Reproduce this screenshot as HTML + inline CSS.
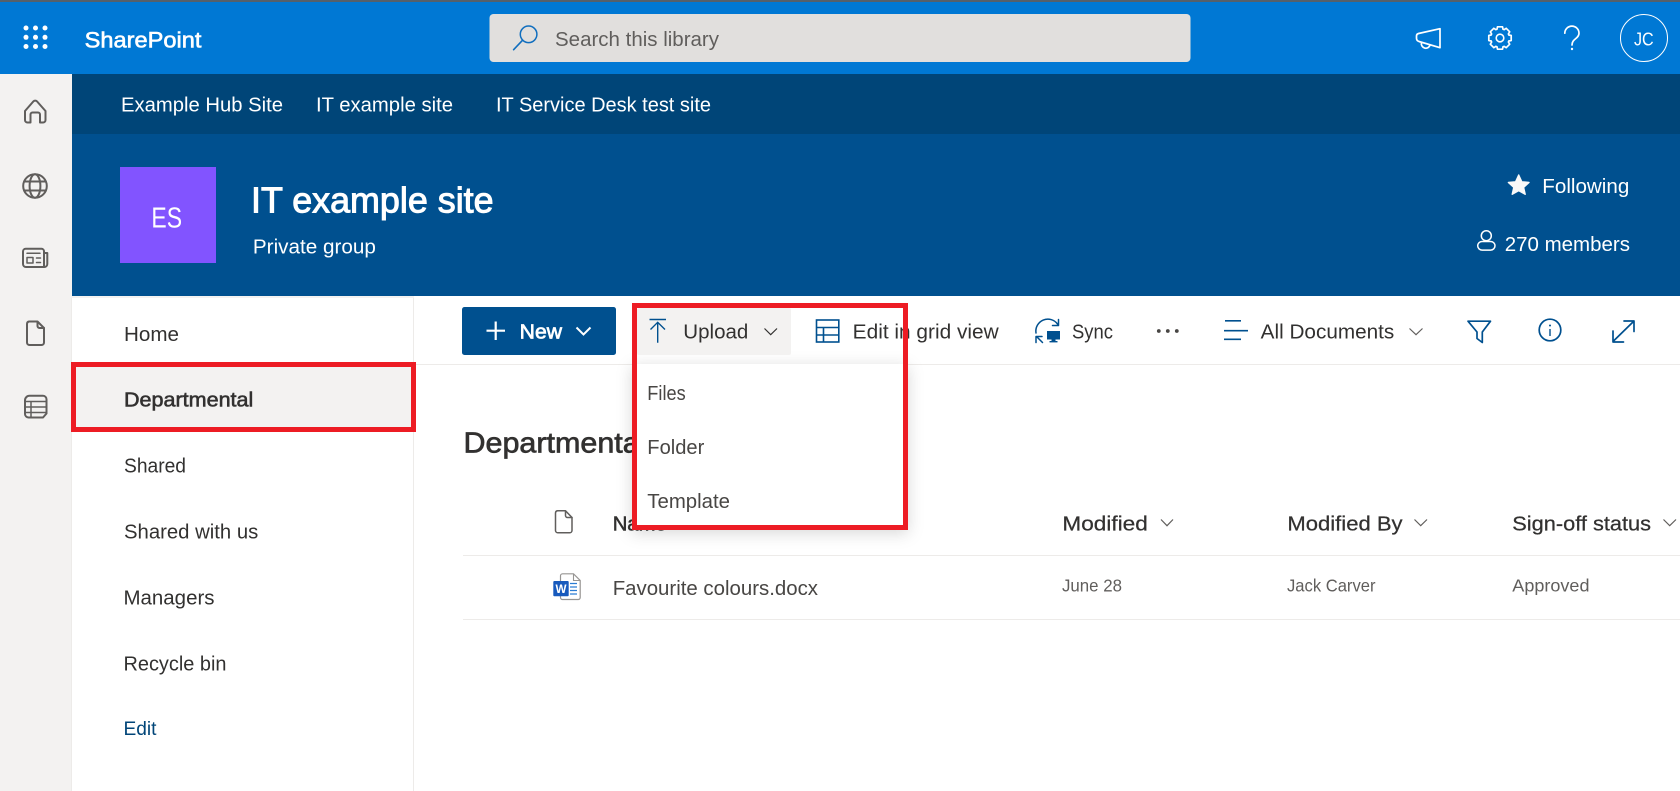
<!DOCTYPE html>
<html lang="en"><head><meta charset="utf-8"><title>SharePoint</title>
<style>
html,body{margin:0;padding:0;background:#fff;overflow:hidden}
svg{display:block}
text{font-family:"Liberation Sans",sans-serif}
.w{fill:#fff}
.n{fill:#323130;font-size:20.5px}
.ic{fill:none;stroke:#00508f;stroke-width:1.7;stroke-linejoin:round;stroke-linecap:round}
.rl{fill:none;stroke:#605e5c;stroke-width:2;stroke-linejoin:round;stroke-linecap:round}
.wi{fill:none;stroke:#fff;stroke-width:1.7;stroke-linejoin:round;stroke-linecap:round}
.ch{fill:none;stroke:#605e5c;stroke-width:1.2}
</style></head>
<body>
<svg xmlns="http://www.w3.org/2000/svg" width="1680" height="791" viewBox="0 0 1680 791">
<rect width="1680" height="791" fill="#fff"/>
<!-- top bar -->
<rect width="1680" height="74" fill="#0078d4"/>
<rect width="1680" height="2" fill="#55606b"/>
<g fill="#fff"><circle cx="26" cy="28" r="2.5"/><circle cx="35.5" cy="28" r="2.5"/><circle cx="45" cy="28" r="2.5"/><circle cx="26" cy="37.3" r="2.5"/><circle cx="35.5" cy="37.3" r="2.5"/><circle cx="45" cy="37.3" r="2.5"/><circle cx="26" cy="46.5" r="2.5"/><circle cx="35.5" cy="46.5" r="2.5"/><circle cx="45" cy="46.5" r="2.5"/></g>
<text x="84.6" y="47.7" font-size="22" class="w" stroke="#fff" stroke-width=".6" textLength="116.8" lengthAdjust="spacingAndGlyphs">SharePoint</text>
<rect x="489.5" y="14" width="701" height="48" rx="4" fill="#e1dfdd"/>
<circle cx="528.6" cy="34.3" r="8.3" fill="none" stroke="#106ebe" stroke-width="1.5"/>
<path d="M522.6 40.2L513.6 49.7" fill="none" stroke="#106ebe" stroke-width="1.6" stroke-linecap="round"/>
<text x="555" y="46" font-size="20" fill="#605e5c" textLength="164" lengthAdjust="spacingAndGlyphs">Search this library</text>
<!-- megaphone -->
<path class="wi" d="M1418.5 33.5L1440 28.7V47.7L1419 41.5Q1416.5 40.6 1416.5 38.2V36Q1416.5 34 1418.5 33.5Z"/>
<path class="wi" d="M1421.5 42.6a4.4 4.4 0 0 0 8.6 2.3"/>
<!-- gear -->
<g transform="translate(1500 38)">
<path class="wi" d="M-2.5-11.2L2.5-11.2L3-8.8L4.1-8.4L6.2-9.7L9.7-6.2L8.4-4.1L8.8-3L11.2-2.5L11.2 2.5L8.8 3L8.4 4.1L9.7 6.2L6.2 9.7L4.1 8.4L3 8.8L2.5 11.2L-2.5 11.2L-3 8.8L-4.1 8.4L-6.2 9.7L-9.7 6.2L-8.4 4.1L-8.8 3L-11.2 2.5L-11.2-2.5L-8.8-3L-8.4-4.1L-9.7-6.2L-6.2-9.7L-4.1-8.4L-3-8.8Z"/>
<circle r="3.8" fill="none" stroke="#fff" stroke-width="1.6"/>
</g>
<!-- question -->
<path class="wi" d="M1564.8 33.2a7.1 7.1 0 0 1 14.2 0c0 5.5-7 5.5-7 11.8"/>
<circle cx="1572" cy="49" r="1.2" fill="#fff"/>
<!-- avatar -->
<circle cx="1644" cy="38" r="23.5" fill="none" stroke="#fff" stroke-width="1"/>
<text x="1634" y="45.3" font-size="18.5" class="w" textLength="19.7" lengthAdjust="spacingAndGlyphs">JC</text>

<!-- hub nav -->
<rect y="74" width="1680" height="60" fill="#004578"/>
<text x="121" y="111.7" font-size="20.5" class="w" textLength="162" lengthAdjust="spacingAndGlyphs">Example Hub Site</text>
<text x="316" y="111.7" font-size="20.5" class="w" textLength="137" lengthAdjust="spacingAndGlyphs">IT example site</text>
<text x="496" y="111.7" font-size="20.5" class="w" textLength="215" lengthAdjust="spacingAndGlyphs">IT Service Desk test site</text>

<!-- site header -->
<rect y="134" width="1680" height="162" fill="#00508f"/>
<rect x="120" y="167" width="96" height="96" fill="#8254ff"/>
<text x="151.4" y="227.7" font-size="29" class="w" textLength="30.6" lengthAdjust="spacingAndGlyphs">ES</text>
<text x="251" y="212.3" font-size="36" class="w" stroke="#fff" stroke-width="1" textLength="242.6" lengthAdjust="spacingAndGlyphs">IT example site</text>
<text x="252.9" y="253.7" font-size="20.5" class="w" textLength="123" lengthAdjust="spacingAndGlyphs">Private group</text>
<path d="M1518.7 175L1521.8 181.8L1529 182.5L1523.6 187.4L1525.2 194.3L1518.7 190.7L1512.2 194.3L1513.8 187.4L1508.4 182.5L1515.6 181.8Z" fill="#faf9f8" stroke="#faf9f8" stroke-width="1.4" stroke-linejoin="round"/>
<text x="1542.3" y="193" font-size="20.5" class="w" textLength="87" lengthAdjust="spacingAndGlyphs">Following</text>
<circle cx="1486.3" cy="235.7" r="5" class="wi" style="stroke-width:1.5"/>
<rect x="1477.7" y="241.5" width="17.3" height="8.6" rx="4.3" class="wi" style="stroke-width:1.5"/>
<text x="1504.7" y="251" font-size="20.5" class="w" textLength="125.3" lengthAdjust="spacingAndGlyphs">270 members</text>

<!-- left rail -->
<rect y="74" width="72" height="717" fill="#f3f2f1"/>
<rect x="71" y="298" width="1" height="493" fill="#edebe9"/>
<path class="rl" d="M25 111L33.4 101.4a2.4 2.4 0 0 1 3.6 0L45.5 111V120a2.5 2.5 0 0 1-2.5 2.5H40V114.5a2 2 0 0 0-2-2H32.5a2 2 0 0 0-2 2V122.5H27.5a2.5 2.5 0 0 1-2.5-2.5Z"/>
<g class="rl"><circle cx="35" cy="186" r="11.8"/><ellipse cx="35" cy="186" rx="5.4" ry="11.8"/><path d="M24.4 181.5H45.6M24.4 190.5H45.6"/></g>
<g class="rl"><path d="M25.7 248.8H41.5a2.5 2.5 0 0 1 2.5 2.5V267H26a3 3 0 0 1-3-3V251.5a2.7 2.7 0 0 1 2.7-2.7Z"/><path d="M44 253H47.3V264a3 3 0 0 1-3 3H44"/><rect x="27" y="257.5" width="6" height="5.5" style="stroke-width:1.5"/><path d="M27 253.3H40M36.5 258H40.5M36.5 262.5H40.5" style="stroke-width:1.5"/></g>
<g class="rl"><path d="M29 321.5H37.5L44 328V342.5a2.5 2.5 0 0 1-2.5 2.5H29.5a2.5 2.5 0 0 1-2.5-2.5V324a2.5 2.5 0 0 1 2-2.5Z"/><path d="M37.5 322V326a2 2 0 0 0 2 2H44"/></g>
<g class="rl"><path d="M29.5 395.8H43a3.5 3.5 0 0 1 3.5 3.5V413.5L43 417.5H28.5a3.5 3.5 0 0 1-3.5-3.5V400.3a4.5 4.5 0 0 1 4.5-4.5Z"/><path d="M25 401.5H46.5M25 407H46.5M25 412.5H46M31 401.5V417.5" style="stroke-width:1.5"/></g>

<!-- left nav -->
<rect x="72" y="296" width="342" height="2" fill="#f3f2f1"/>
<rect x="413" y="298" width="1" height="493" fill="#edebe9"/>
<rect x="71" y="362" width="345" height="70" fill="#f3f2f1"/>
<text x="124" y="341" class="n" textLength="55" lengthAdjust="spacingAndGlyphs">Home</text>
<text x="124" y="406.7" class="n" stroke="#323130" stroke-width=".6" textLength="129.3" lengthAdjust="spacingAndGlyphs">Departmental</text>
<text x="124" y="472.7" class="n" textLength="62" lengthAdjust="spacingAndGlyphs">Shared</text>
<text x="124" y="538.7" class="n" textLength="134.3" lengthAdjust="spacingAndGlyphs">Shared with us</text>
<text x="123.5" y="604.7" class="n" textLength="91" lengthAdjust="spacingAndGlyphs">Managers</text>
<text x="123.5" y="670.7" class="n" textLength="103" lengthAdjust="spacingAndGlyphs">Recycle bin</text>
<text x="123.5" y="735" font-size="19" fill="#004578" textLength="33" lengthAdjust="spacingAndGlyphs">Edit</text>

<!-- toolbar -->
<rect x="414" y="364" width="1266" height="1" fill="#edebe9"/>
<rect x="462" y="307" width="154" height="48" rx="2.5" fill="#00508f"/>
<path d="M495.7 321.5V340M486.5 330.7H505" stroke="#fff" stroke-width="2.2" fill="none"/>
<text x="519.7" y="338.7" font-size="20.5" class="w" stroke="#fff" stroke-width=".7" textLength="42.3" lengthAdjust="spacingAndGlyphs">New</text>
<path d="M576.5 327.5L583.5 334.5L590.5 327.5" fill="none" stroke="#fff" stroke-width="2"/>

<!-- Departmental heading + column name (below menu) -->
<text x="463.5" y="452.7" font-size="29" fill="#323130" stroke="#323130" stroke-width=".7" textLength="183" lengthAdjust="spacingAndGlyphs">Departmental</text>
<path class="rl" style="stroke-width:1.5" d="M557.5 510.8H565.5L572 517.5V530.5a2.3 2.3 0 0 1-2.3 2.3H557.8a2.3 2.3 0 0 1-2.3-2.3V513a2.3 2.3 0 0 1 2-2.2Z"/>
<path class="rl" style="stroke-width:1.5" d="M565.5 511V515.5a2 2 0 0 0 2 2H572"/>
<text x="612.7" y="530.7" font-size="20.5" fill="#323130" stroke="#323130" stroke-width=".5" textLength="54" lengthAdjust="spacingAndGlyphs">Name</text>

<!-- menu -->
<rect x="632" y="364" width="276" height="166" fill="#fff" style="filter:drop-shadow(0 3px 8px rgba(0,0,0,.16))"/>
<text x="647.3" y="400" font-size="20.5" fill="#484644" textLength="38.4" lengthAdjust="spacingAndGlyphs">Files</text>
<text x="647.3" y="454" font-size="20.5" fill="#484644" textLength="57" lengthAdjust="spacingAndGlyphs">Folder</text>
<text x="647.3" y="508" font-size="20.5" fill="#484644" textLength="82.7" lengthAdjust="spacingAndGlyphs">Template</text>

<!-- upload button -->
<rect x="637" y="308" width="154" height="47" rx="2" fill="#f3f2f1"/>
<path d="M649.5 319.5H666M657.7 322.5V342.7M650.5 329.5L657.7 322.3L665 329.5" fill="none" stroke="#00508f" stroke-width="1.4"/>
<text x="683.3" y="338.7" font-size="20.5" fill="#323130" textLength="65" lengthAdjust="spacingAndGlyphs">Upload</text>
<path class="ch" style="stroke:#323130" d="M764.5 328.5L770.7 334.7L777 328.5"/>

<!-- grid -->
<g fill="none" stroke="#00508f" stroke-width="1.6"><rect x="816.5" y="320" width="22.3" height="22"/><path d="M816.5 327.5H838.8M816.5 335H838.8M823.5 327.5V342"/></g>
<text x="852.7" y="338.7" font-size="20.5" fill="#323130" textLength="146" lengthAdjust="spacingAndGlyphs">Edit in grid view</text>

<!-- sync -->
<path class="ic" style="stroke-width:1.5" d="M1036 333a12 12 0 0 1 21.5-9M1058.5 319.5V325.5H1052.5M1036.5 336.5L1042.5 342.5M1036 342.5V336.5H1042"/>
<rect x="1047" y="331" width="13" height="8.5" fill="#00508f"/>
<rect x="1051.5" y="339" width="4" height="2.5" fill="#00508f"/>
<rect x="1049.5" y="341" width="8" height="1.4" fill="#00508f"/>
<text x="1072" y="338.7" font-size="20.5" fill="#323130" textLength="41" lengthAdjust="spacingAndGlyphs">Sync</text>
<g fill="#484644"><circle cx="1158.8" cy="331" r="1.9"/><circle cx="1167.8" cy="331" r="1.9"/><circle cx="1176.8" cy="331" r="1.9"/></g>
<!-- all docs -->
<path d="M1225 320.8H1241M1224 330.7H1248M1224 339.3H1241" stroke="#00508f" stroke-width="1.6" fill="none"/>
<text x="1260.7" y="338.7" font-size="20.5" fill="#323130" textLength="133.6" lengthAdjust="spacingAndGlyphs">All Documents</text>
<path class="ch" d="M1409.5 328.5L1416 334.7L1422.5 328.5"/>
<!-- filter -->
<path class="ic" d="M1468 321.2H1490.5L1482.3 332V342.5L1477 338.5V332Z"/>
<!-- info -->
<circle cx="1550" cy="330" r="10.8" class="ic"/>
<circle cx="1550" cy="325.5" r="1" fill="#00508f"/>
<path d="M1550 329V336" stroke="#00508f" stroke-width="1.4"/>
<!-- expand -->
<path class="ic" d="M1613 341.5L1634 321M1624 321H1634V331.5M1613 331V342H1623.5"/>

<!-- list -->
<text x="1062.4" y="530.7" font-size="20.5" fill="#323130" stroke="#323130" stroke-width=".25" textLength="85.4" lengthAdjust="spacingAndGlyphs">Modified</text>
<path class="ch" d="M1161 519.5L1167 525.7L1173 519.5"/>
<text x="1287.4" y="530.7" font-size="20.5" fill="#323130" stroke="#323130" stroke-width=".25" textLength="115.2" lengthAdjust="spacingAndGlyphs">Modified By</text>
<path class="ch" d="M1414.5 519.5L1420.7 525.7L1427 519.5"/>
<text x="1512.3" y="530.7" font-size="20.5" fill="#323130" stroke="#323130" stroke-width=".25" textLength="138.7" lengthAdjust="spacingAndGlyphs">Sign-off status</text>
<path class="ch" d="M1663.5 519.5L1669.7 525.7L1676 519.5"/>
<rect x="463" y="555" width="1217" height="1" fill="#edebe9"/>
<!-- word icon -->
<path d="M562.5 573.8H573.5L580.2 580.5V597.5a2 2 0 0 1-2 2H562.5a2 2 0 0 1-2-2V575.8a2 2 0 0 1 2-2Z" fill="#fff" stroke="#979593" stroke-width="1.2"/>
<path d="M573.5 574V580.5H580" fill="none" stroke="#979593" stroke-width="1.1"/>
<rect x="553.3" y="581" width="15.4" height="15.2" rx="1" fill="#185abd"/>
<text x="555.5" y="593" font-size="11.5" font-weight="700" fill="#fff" textLength="11" lengthAdjust="spacingAndGlyphs">W</text>
<path d="M570 583.5H577M570 587H577M570 590.5H577M570 594H577" stroke="#2b7cd3" stroke-width="1.3"/>
<text x="612.7" y="595" font-size="20.5" fill="#484644" textLength="205.3" lengthAdjust="spacingAndGlyphs">Favourite colours.docx</text>
<text x="1062" y="591.3" font-size="17.5" fill="#605e5c" textLength="60" lengthAdjust="spacingAndGlyphs">June 28</text>
<text x="1287" y="591.3" font-size="17.5" fill="#605e5c" textLength="88.5" lengthAdjust="spacingAndGlyphs">Jack Carver</text>
<text x="1512.3" y="591.3" font-size="17.5" fill="#605e5c" textLength="77.2" lengthAdjust="spacingAndGlyphs">Approved</text>
<rect x="463" y="619" width="1217" height="1" fill="#edebe9"/>

<!-- red annotations -->
<rect x="73.5" y="364.5" width="340" height="65" fill="none" stroke="#ed1c24" stroke-width="5"/>
<rect x="634.5" y="305.5" width="271" height="222" fill="none" stroke="#ed1c24" stroke-width="5"/>
</svg>
</body></html>
